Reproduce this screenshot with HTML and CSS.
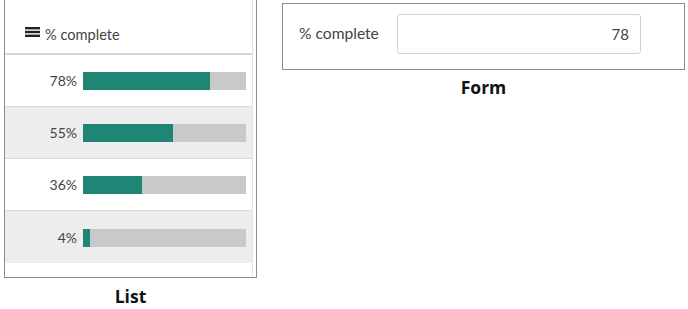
FILE: index.html
```html
<!DOCTYPE html>
<html>
<head>
<meta charset="utf-8">
<link rel="stylesheet" href="styles.css">
</head>
<body>
<div class="page">
  <div class="col col-list">
    <div class="list-panel">
      <div class="list-inner">
        <div class="list-head">
          <svg class="menu-icon" width="15" height="10" viewBox="0 0 15 10"><rect x="0" y="0" width="15" height="2.4" fill="#222"/><rect x="0" y="3.8" width="15" height="2.4" fill="#222"/><rect x="0" y="7.6" width="15" height="2.4" fill="#222"/></svg>
          <span class="head-text">% complete</span>
        </div>
        <div class="row"><span class="pct">78%</span><div class="track"><div class="fill" style="width:78%"></div></div></div>
        <div class="row alt"><span class="pct">55%</span><div class="track"><div class="fill" style="width:55%"></div></div></div>
        <div class="row"><span class="pct">36%</span><div class="track"><div class="fill" style="width:36%"></div></div></div>
        <div class="row alt last"><span class="pct">4%</span><div class="track"><div class="fill" style="width:4%"></div></div></div>
      </div>
    </div>
    <div class="caption caption-list">List</div>
  </div>
  <div class="col col-form">
    <div class="form-panel">
      <span class="form-label">% complete</span>
      <div class="form-input">78</div>
    </div>
    <div class="caption caption-form">Form</div>
  </div>
</div>
</body>
</html>
```
FILE: styles.css
```css
html, body {
  margin: 0;
  padding: 0;
  background: #ffffff;
}
body {
  font-family: "Lato", "Noto Sans", sans-serif;
  color: #444;
  width: 688px;
  height: 309px;
  overflow: hidden;
}
.page {
  display: flex;
  align-items: flex-start;
  padding-left: 4px;
  gap: 25px;
}
.col {
  display: flex;
  flex-direction: column;
  align-items: center;
}
.col-list {
  width: 253px;
}
.list-panel {
  width: 100%;
  box-sizing: border-box;
  height: 278px;
  border-left: 1px solid #8c8c8c;
  border-right: 1px solid #8c8c8c;
  border-bottom: 1px solid #8c8c8c;
  padding-right: 3px;
  background: #fff;
}
.list-inner {
  border-right: 1px solid #e2e2e2;
  height: 100%;
  box-sizing: border-box;
}
.list-head {
  height: 53px;
  border-bottom: 2px solid #d6d6d6;
  box-sizing: content-box;
  display: flex;
  align-items: flex-end;
  padding-left: 20px;
  gap: 5px;
}
.menu-icon {
  margin-bottom: 16px;
}
.head-text {
  font-size: 14.6px;
  color: #444;
  margin-bottom: 10px;
}
.row {
  height: 51px;
  border-bottom: 1px solid #d9d9d9;
  display: grid;
  grid-template-columns: 72px 1fr;
  column-gap: 6px;
  align-items: center;
  padding-right: 6px;
}
.row.alt {
  background: #ededed;
}
.row.last {
  height: 52px;
  border-bottom: none;
}
.pct {
  text-align: right;
  font-size: 14px;
  color: #444;
}
.track {
  height: 18px;
  background: #c9c9c9;
  margin-top: 1px;
}
.fill {
  height: 100%;
  background: #1f8574;
}
.caption {
  font-family: "Open Sans", "Liberation Sans", sans-serif;
  font-weight: 700;
  font-size: 17.5px;
  color: #111;
}
.caption-list {
  margin-top: 6px;
}
.col-form {
  width: 403px;
  margin-top: 3px;
}
.form-panel {
  width: 100%;
  box-sizing: border-box;
  height: 67px;
  border: 1px solid #8c8c8c;
  display: flex;
  align-items: center;
  padding-left: 16px;
  padding-right: 43px;
  gap: 18px;
}
.form-label {
  font-size: 15.6px;
  color: #444;
  margin-top: -8px;
}
.form-input {
  flex: 1;
  height: 40px;
  box-sizing: border-box;
  border: 1px solid #d4d4d4;
  border-radius: 3px;
  text-align: right;
  padding-right: 11px;
  font-size: 15px;
  line-height: 38px;
  color: #444;
  margin-top: -6px;
}
.caption-form {
  margin-top: 5px;
}
```
